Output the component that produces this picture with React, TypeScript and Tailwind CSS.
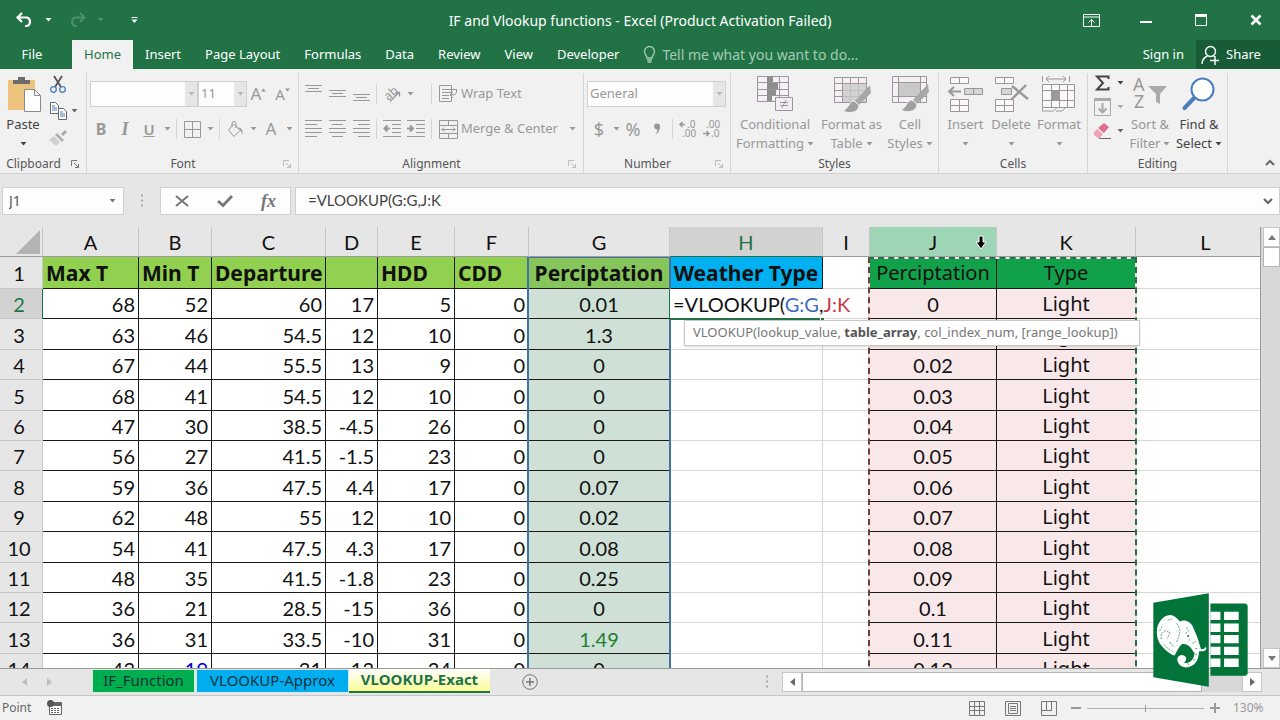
import { useState } from "react";
import type { ReactNode } from "react";

const ui = "font-['Noto_Sans',sans-serif]";
const sheet = "font-[Lato,sans-serif]";

/* ---------- small drawing helpers ---------- */

function Ico({ w, h, children, className = "" }: { w: number; h: number; children: ReactNode; className?: string }) {
  return (
    <svg width={w} height={h} viewBox={"0 0 " + w + " " + h} fill="none" stroke="currentColor" className={"shrink-0 overflow-visible " + className} aria-hidden="true">
      {children}
    </svg>
  );
}

function Caret({ className = "" }: { className?: string }) {
  return <Ico w={7} h={4} className={className}><path d="M0.5 0h6l-3 3.5z" fill="currentColor" stroke="none" /></Ico>;
}

function Launcher({ className = "" }: { className?: string }) {
  return (
    <button aria-label="More options" className={"flex w-4 h-4 items-center justify-center " + className}>
      <Ico w={8} h={8}><path d="M0.5 6V0.5H6M3 3l4 4M7.500 4v3.500H4" /></Ico>
    </button>
  );
}

const Sep = () => <span className="w-px h-5 bg-[#d5d5d5] mx-[3px]" />;

/* ---------- title bar and tabs ---------- */

function TitleBar() {
  return (
    <div className="grid grid-cols-[1fr_auto_1fr] items-center h-10 bg-[#217346] text-white">
      <div className="flex items-center pl-4">
        <button aria-label="Undo" className="w-[18px]">
          <Ico w={18} h={16}><path d="M2 5.500h9a4.500 4.500 0 0 1 0 8.500H9M6 1L1.500 5.500 6 10" strokeWidth="2.200" /></Ico>
        </button>
        <button aria-label="Undo list" className="w-7 flex justify-center"><Caret /></button>
        <button aria-label="Redo" className="w-[18px] ml-[6px] text-[#4c9069]">
          <Ico w={18} h={16}><path d="M16 5.500H7a4.500 4.500 0 0 0 0 8.500h2M12 1l4.500 4.500L12 10" strokeWidth="2" /></Ico>
        </button>
        <button aria-label="Redo list" className="w-7 flex justify-center text-[#4c9069]"><Caret /></button>
        <button aria-label="Customize toolbar" className="w-6 ml-2 flex justify-center">
          <Ico w={7} h={6}><path d="M0.500 0.500h6" /><path d="M0.500 2.500h6l-3 3.500z" fill="currentColor" stroke="none" /></Ico>
        </button>
      </div>
      <h1 className="pt-[2px] text-sm">IF and Vlookup functions - Excel (Product Activation Failed)</h1>
      <div className="flex justify-end gap-[7px]">
        <button aria-label="Ribbon display" className="w-12 h-8 flex items-center justify-center">
          <Ico w={17} h={13}><path d="M0.500 0.500h16v12h-16zM0.500 3h16M8.500 12V5.500M5.500 8.500l3-3 3 3" /></Ico>
        </button>
        <button aria-label="Minimize" className="w-12 h-8 flex items-center justify-center">
          <Ico w={12} h={8}><path d="M0 6h12" strokeWidth="2" /></Ico>
        </button>
        <button aria-label="Maximize" className="w-12 h-8 flex items-center justify-center">
          <Ico w={12} h={12}><path d="M0.500 0.500h11v11h-11z" /><path d="M0 1.500h12" strokeWidth="3" /></Ico>
        </button>
        <button aria-label="Close" className="w-12 h-8 flex items-center justify-center">
          <Ico w={12} h={12}><path d="M1.500 1.500l9 9M10.500 1.500l-9 9" strokeWidth="2.600" /></Ico>
        </button>
      </div>
    </div>
  );
}

const tabs = ["Insert", "Page Layout", "Formulas", "Data", "Review", "View", "Developer"];

function TabBar() {
  return (
    <nav className="flex h-[29px] bg-[#217346] text-white text-[13px]">
      <button className="w-16 mr-2">File</button>
      <button className="w-[61px] bg-[#f1f1f1] text-[#217346]">Home</button>
      {tabs.map(t => <button key={t} className="px-3">{t}</button>)}
      <label className="flex items-center gap-[6px] ml-3 text-sm text-[#a5cab5]">
        <Ico w={13} h={17}><path d="M4 12C4 9.500 1.500 8.500 1.500 5.500a5 5 0 0 1 10 0C11.500 8.500 9 9.500 9 12z" strokeWidth="1.300" /><path d="M4 14h5M4.500 16h4" strokeWidth="1.300" /></Ico>
        <input aria-label="Tell me" placeholder="Tell me what you want to do..." className="w-[210px] bg-transparent outline-none placeholder:text-[#a5cab5]" />
      </label>
      <button className="ml-auto px-3">Sign in</button>
      <button className="flex items-center gap-[6px] w-[84px] pl-[5px] bg-[#185c37]">
        <Ico w={19} h={20}><circle cx="9.500" cy="6.500" r="5" strokeWidth="1.400" /><path d="M1 19c0-4 2-6.500 5.500-8M12.500 11l1.500 1M9 15.500h9M14 11v9" strokeWidth="1.400" /></Ico>
        Share
      </button>
    </nav>
  );
}

/* ---------- ribbon ---------- */

function Group({ name, width, launcher, children }: { name: string; width: string; launcher?: string; children: ReactNode }) {
  return (
    <section aria-label={name} className={"flex flex-col border-r border-[#d5d5d5] mt-1 " + width}>
      <div className="flex-1">{children}</div>
      <div className="flex items-center h-[18px] text-xs text-[#555]">
        <span className="flex-1 text-center">{name}</span>
        {launcher && <Launcher className={"mr-[3px] " + launcher} />}
      </div>
    </section>
  );
}

function Combo({ label, value, width }: { label: string; value: string; width: string }) {
  return (
    <div className={"relative h-[26px] border border-[#d0d0d0] bg-[#fdfdfd] " + width}>
      <select aria-label={label} disabled className="block w-full h-full appearance-none pl-[2px] pr-3 text-[13px] text-[#989898]">
        <option>{value}</option>
      </select>
      <span className="absolute right-0 inset-y-0 w-3 flex items-center justify-center bg-[#e6e6e6] text-[#b5b5b5] pointer-events-none"><Caret /></span>
    </div>
  );
}

function Tool({ label, width = "w-6", children }: { label: string; width?: string; children: ReactNode }) {
  return <button aria-label={label} className={"h-5 flex items-center justify-center shrink-0 " + width}>{children}</button>;
}

function BigTool({ icon, lines, width, color = "text-[#989898]" }: { icon: ReactNode; lines: string[]; width: string; color?: string }) {
  return (
    <button className={"flex flex-col items-center text-[13px] leading-[19px] whitespace-nowrap " + width + " " + color}>
      <span className="h-[42px] flex items-center">{icon}</span>
      <span>{lines[0]}</span>
      <span className="flex items-center gap-[3px] h-[19px]">{lines[1]}<Caret /></span>
    </button>
  );
}

function AlignIcon({ rows }: { rows: [number, number, number][] }) {
  return <Ico w={17} h={18}>{rows.map(([x, y, w]) => <path key={y} d={`M${x} ${y + 0.5}h${w}`} />)}</Ico>;
}

function ClipboardGroup() {
  return (
    <Group name="Clipboard" width="w-[87px]" launcher="text-[#777]">
      <div className="flex">
        <BigTool width="w-[46px]" color="text-[#444]" lines={["Paste", ""]} icon={
          <Ico w={34} h={36} className="ml-1">
            <path d="M0 4h27v30H0z" fill="#ecc37c" stroke="none" />
            <path d="M5 8V4h5V1h7v3h5v4z" fill="#6b6b6b" stroke="none" />
            <path d="M16.500 13.500h10l6 6v16h-16zM26.500 13.500v6h6" fill="#fff" stroke="#8a8a8a" />
          </Ico>
        } />
        <div className="flex flex-col pt-[2px] gap-[6px]">
          <Tool label="Cut" width="w-[23px]">
            <Ico w={16} h={18}><path d="M4 0l7 11M12 0L5 11" stroke="#555" strokeWidth="1.800" /><circle cx="3.500" cy="13.500" r="2.800" stroke="#4a7ebb" strokeWidth="1.300" /><circle cx="12.500" cy="13.500" r="2.800" stroke="#4a7ebb" strokeWidth="1.300" /></Ico>
          </Tool>
          <div className="flex items-center text-[#666]">
            <Tool label="Copy" width="w-[25px]">
              <Ico w={17} h={18}><path d="M0.500 0.500h5l3 3v8h-8zM8.500 6.500h5l3 3v8h-8z" fill="#fff" stroke="#666" /><path d="M2 4h3M2 6h5M2 8h5M10 10h3M10 12h5M10 14h5" stroke="#4a7ebb" /></Ico>
            </Tool>
            <Caret />
          </div>
          <Tool label="Format painter" width="w-[23px]">
            <Ico w={18} h={17}><path d="M12 5l4-4 2 2-4 4z" fill="#aaa" stroke="none" /><path d="M8 4l7 7-2 2-7-7z" fill="#b0b0b0" stroke="none" /><path d="M5 7l6 6-4 4-7-6z" fill="#cfcfcf" stroke="none" /></Ico>
          </Tool>
        </div>
      </div>
    </Group>
  );
}

function FontGroup() {
  return (
    <Group name="Font" width="w-[212px]" launcher="text-[#bbb]">
      <div className="flex items-center pt-2 pl-[3px] text-[#989898]">
        <Combo label="Font" value=" " width="w-[108px]" />
        <Combo label="Font size" value="11" width="w-[49px]" />
        <Tool label="Increase font size"><span className="text-[17px]">A</span><Ico w={6} h={12}><path d="M0 3.500L2.500 0.500 5 3.500z" fill="currentColor" stroke="none" /></Ico></Tool>
        <Tool label="Decrease font size"><span className="text-[15px]">A</span><Ico w={6} h={12}><path d="M0 0.500h5L2.500 3.500z" fill="currentColor" stroke="none" /></Ico></Tool>
      </div>
      <div className="flex items-center pt-3 pl-[2px] text-[#989898]">
        <Tool label="Bold"><b className="text-base">B</b></Tool>
        <Tool label="Italic"><i className="text-lg font-semibold font-['Liberation_Serif',serif]">I</i></Tool>
        <Tool label="Underline"><u className="text-[15px] font-semibold">U</u></Tool>
        <Tool label="Underline styles" width="w-3"><Caret /></Tool>
        <Sep />
        <Tool label="Borders"><Ico w={17} h={17}><path d="M0.500 0.500h16v16h-16zM8.500 0v17M0 8.500h17" /></Ico></Tool>
        <Tool label="Border styles" width="w-3"><Caret /></Tool>
        <Sep />
        <Tool label="Fill color"><Ico w={17} h={17}><path d="M6.500 3l6.500 6.500-6 6L1.500 9zM5 6V2.500a2 2 0 0 1 4 0V7" /><path d="M11 6.500c3 0 5 2 4.500 7-1-2-1.500-4-4.500-7z" fill="currentColor" stroke="none" /></Ico></Tool>
        <Tool label="Fill colors" width="w-3"><Caret /></Tool>
        <Tool label="Font color"><span className="text-[17px]">A</span></Tool>
        <Tool label="Font colors" width="w-3"><Caret /></Tool>
      </div>
    </Group>
  );
}

function AlignmentGroup() {
  return (
    <Group name="Alignment" width="w-[285px]" launcher="text-[#bbb]">
      <div className="flex items-center pt-[11px] pl-[2px] text-[#989898]">
        <Tool label="Top align"><AlignIcon rows={[[0, 0, 17], [3, 3, 11], [0, 6, 17]]} /></Tool>
        <Tool label="Middle align"><AlignIcon rows={[[0, 5, 17], [3, 8, 11], [0, 11, 17]]} /></Tool>
        <Tool label="Bottom align"><AlignIcon rows={[[0, 9, 17], [3, 12, 11], [0, 15, 17]]} /></Tool>
        <Sep />
        <Tool label="Orientation">
          <Ico w={17} h={16}><text x="0" y="12" fontSize="12" fill="currentColor" stroke="none" transform="rotate(-42 6 8)">ab</text><path d="M6 15.500l9-9M11.500 6.500H15.500V10.500" strokeWidth="1.300" /></Ico>
        </Tool>
        <Tool label="Orientations" width="w-3"><Caret /></Tool>
        <span className="w-3" />
        <Sep />
        <button className="flex items-center gap-[3px] ml-1 text-[13px]">
          <Ico w={19} h={18}><path d="M0.500 0.500h12v16h-12zM3 4.500h14M3 7.500h10M3 10.500h7M3 13.500h7M17.500 4v3q0 3-6 3M14 7l-3 3 3 3" /></Ico>
          Wrap Text
        </button>
      </div>
      <div className="flex items-center pt-[15px] pl-[2px] text-[#989898]">
        <Tool label="Align left"><AlignIcon rows={[[0, 0, 17], [0, 4, 12], [0, 8, 17], [0, 12, 17], [0, 16, 12]]} /></Tool>
        <Tool label="Center"><AlignIcon rows={[[0, 0, 17], [3, 4, 11], [0, 8, 17], [0, 12, 17], [3, 16, 11]]} /></Tool>
        <Tool label="Align right"><AlignIcon rows={[[0, 0, 17], [5, 4, 12], [0, 8, 17], [0, 12, 17], [5, 16, 12]]} /></Tool>
        <Sep />
        <Tool label="Decrease indent"><Ico w={18} h={18}><path d="M0 0.500h18M9 4.500h9M9 8.500h9M9 12.500h9M0 16.500h18" /><path d="M7 8.500H2M4.500 5.500l-3 3 3 3" strokeWidth="2" /></Ico></Tool>
        <Tool label="Increase indent"><Ico w={18} h={18}><path d="M0 0.500h18M9 4.500h9M9 8.500h9M9 12.500h9M0 16.500h18" /><path d="M0 8.500h5M3 5.500l3 3-3 3" strokeWidth="2" /></Ico></Tool>
        <Sep />
        <button className="flex items-center gap-[3px] ml-1 text-[13px] whitespace-nowrap">
          <Ico w={19} h={19}><path d="M0.500 0.500h18v18h-18zM0.500 5.500h18M0.500 13.500h18M9.500 0.500v5M9.500 13.500v5M2.500 9.500h14M5 7.500l-2 2 2 2M14 7.500l2 2-2 2" /></Ico>
          Merge &amp; Center
          <Caret className="ml-2" />
        </button>
      </div>
    </Group>
  );
}

function NumberGroup() {
  return (
    <Group name="Number" width="w-[147px]" launcher="text-[#bbb]">
      <div className="pt-2 pl-[3px]">
        <Combo label="Number format" value="General" width="w-[139px]" />
      </div>
      <div className="flex items-center pt-3 pl-[3px] text-[#989898]">
        <Tool label="Accounting format"><span className="text-lg">$</span></Tool>
        <Tool label="Currencies" width="w-[10px]"><Caret /></Tool>
        <Tool label="Percent"><span className="text-lg">%</span></Tool>
        <Tool label="Comma style"><Ico w={8} h={12}><path d="M1 3.500a3 3 0 1 1 6 0c0 4-2 6.500-4.500 8 1-2 2-3 2-5A3 3 0 0 1 1 3.500z" fill="currentColor" stroke="none" /></Ico></Tool>
        <Sep />
        <Tool label="Increase decimal">
          <Ico w={18} h={18}><path d="M6 4.500H1M3.500 2L1 4.500 3.500 7" strokeWidth="1.500" /><g fill="currentColor" stroke="none" fontSize="10"><text x="8" y="8">.0</text><text x="3" y="17">.00</text></g></Ico>
        </Tool>
        <Tool label="Decrease decimal">
          <Ico w={18} h={18}><path d="M0 13.500h6M3.500 11L6 13.500 3.500 16" strokeWidth="1.500" /><g fill="currentColor" stroke="none" fontSize="10"><text x="3" y="8">.00</text><text x="8" y="17">.0</text></g></Ico>
        </Tool>
      </div>
    </Group>
  );
}

const Brush = () => (
  <g stroke="none">
    <path d="M36 8L21 24l4 4L37 16z" fill="#a8a8a8" />
    <path d="M20 24c-5 0-5 7-11 10 6 3 16 2 16-6z" fill="#a0a0a0" stroke="#f1f1f1" />
  </g>
);

function StylesGroup() {
  return (
    <Group name="Styles" width="w-[208px]">
      <div className="flex">
        <BigTool width="w-[88px]" lines={["Conditional", "Formatting"]} icon={
          <Ico w={36} h={36}>
            <path d="M0.500 0.500h31v25h-31zM0.500 6.500h31M0.500 13.500h31M0.500 19.500h31M10.500 0v26M22.500 0v26" fill="#f6f0f6" />
            <path d="M10 1h6v5h-6zM10 7h11v6H10zM10 14h9v5h-9zM10 20h5v5h-5z" fill="#8e8e8e" stroke="none" />
            <path d="M18.500 21.500h17v13h-17z" fill="#f3eef3" /><path d="M23 26.500h8M23 29.500h8M29 24l-4 8" />
          </Ico>
        } />
        <BigTool width="w-[65px]" lines={["Format as", "Table"]} icon={
          <Ico w={36} h={34}>
            <path d="M0.500 0.500h32v25h-32zM0.500 6.500h32M0.500 13.500h32M0.500 19.500h32M8.500 0v26M16.500 0v26M24.500 0v26" fill="#f6f0f6" />
            <path d="M9 7h23v18H9z" fill="#c9c9cb" fillOpacity="0.800" stroke="none" /><Brush />
          </Ico>
        } />
        <BigTool width="w-[52px]" lines={["Cell", "Styles"]} icon={
          <Ico w={36} h={36}>
            <path d="M0.500 0.500h34v26h-34zM0.500 6.500h34M0.500 20.500h34M6.500 0v26M28.500 0v26" fill="#f6f0f6" />
            <path d="M7 7h21v13H7z" fill="#c9c9cb" stroke="none" /><Brush />
          </Ico>
        } />
      </div>
    </Group>
  );
}

function CellsGroup() {
  return (
    <Group name="Cells" width="w-[149px]">
      <div className="flex pl-1">
        <BigTool width="w-[45px]" lines={["Insert", ""]} icon={
          <Ico w={36} h={35}>
            <path d="M2.500 0.500h18v6h-18zM11.500 0v7M2.500 22.500h18v12h-18zM2.500 28.500h18M11.500 22v12" fill="#fbf7fb" />
            <path d="M16.500 11.500h18v6h-18zM25.500 11v7" fill="#d5d5d5" /><path d="M13 14.500H1M6 10l-5 4.500 5 4.500" strokeWidth="2" />
          </Ico>
        } />
        <BigTool width="w-[46px]" lines={["Delete", ""]} icon={
          <Ico w={36} h={35}>
            <path d="M2.500 0.500h18v6h-18zM11.500 0v7M2.500 22.500h18v12h-18zM2.500 28.500h18M11.500 22v12" fill="#fbf7fb" />
            <path d="M8.500 11.500h10v6h-10z" fill="#d5d5d5" /><path d="M19 9l16 13M33 8L18 23" strokeWidth="2.400" />
          </Ico>
        } />
        <BigTool width="w-[50px]" lines={["Format", ""]} icon={
          <Ico w={34} h={36}>
            <path d="M0.500 0v6M27.500 0v6M4 3h20M7 0L4 3l3 3M21 0l3 3-3 3" />
            <path d="M0.500 8.500h32v23h-32zM0.500 14.500h32M0.500 24.500h32M9.500 8v24M17.500 8v24M25.500 8v24M0.500 32v3h11l3-3M14 35h6l3-3" fill="#fbf7fb" />
            <path d="M9 15h9v10H9z" fill="#9a9a9a" stroke="none" />
          </Ico>
        } />
      </div>
    </Group>
  );
}

function EditingGroup() {
  return (
    <Group name="Editing" width="w-[140px]">
      <div className="flex">
        <div className="flex flex-col gap-1 w-[37px]">
          <div className="flex items-center text-[#444]">
            <Tool label="AutoSum" width="w-[29px]"><Ico w={15} h={16}><path d="M13.500 4V1.500H2L8 8l-6 6.500h11.500V12" strokeWidth="2" /></Ico></Tool><Caret />
          </div>
          <div className="flex items-center text-[#aaa]">
            <Tool label="Fill" width="w-[29px]"><Ico w={17} h={18}><path d="M0.500 0.500h16v17h-16z" /><path d="M0 1.500h17" strokeWidth="3" /><path d="M8.500 5v9M4.500 10.500l4 4 4-4" strokeWidth="2" /></Ico></Tool><Caret />
          </div>
          <div className="flex items-center text-[#666]">
            <Tool label="Clear" width="w-[29px]"><Ico w={18} h={16}><path d="M0 9l3-3 6 5-3 4H4L0 12z" fill="#f0a3b2" stroke="none" /><path d="M4 5l6-5 5 4-5 6z" fill="#e0708b" stroke="none" /><path d="M5 15.500h12" /></Ico></Tool><Caret />
          </div>
        </div>
        <BigTool width="w-[50px]" lines={["Sort &", "Filter"]} icon={
          <Ico w={34} h={32}>
            <g fill="currentColor" stroke="none" fontSize="18"><text x="0" y="13">A</text><text x="1" y="30">Z</text></g>
            <path d="M15 8h19l-7 8v10l-4-2v-8z" fill="#aaa" stroke="none" />
          </Ico>
        } />
        <BigTool width="w-[48px]" color="text-[#444]" lines={["Find &", "Select"]} icon={
          <Ico w={34} h={34}><path d="M2.500 31L13 20" stroke="#4a7ebb" strokeWidth="4" strokeLinecap="round" /><circle cx="20.500" cy="12.500" r="11" fill="#fff" stroke="#4a7ebb" strokeWidth="2" /></Ico>
        } />
      </div>
    </Group>
  );
}

function Ribbon() {
  return (
    <div className="flex h-[105px] bg-[#f1f1f1] border-b border-[#d2d2d2]">
      <ClipboardGroup />
      <FontGroup />
      <AlignmentGroup />
      <NumberGroup />
      <StylesGroup />
      <CellsGroup />
      <EditingGroup />
      <button aria-label="Collapse ribbon" className="ml-auto self-end p-[5px] text-[#666]">
        <Ico w={10} h={10}><path d="M1 7l4-4 4 4" strokeWidth="2" /></Ico>
      </button>
    </div>
  );
}

/* ---------- formula bar ---------- */

const Dots = () => <Ico w={3} h={14}><path d="M0 1.500h2M0 6.500h2M0 11.500h2" stroke="#aaa" strokeWidth="2" /></Ico>;

function FormulaBar({ formula, onChange }: { formula: string; onChange: (v: string) => void }) {
  return (
    <div className="flex items-center h-[53px] pl-[2px] bg-[#e6e6e6]">
      <div className="flex items-center w-[122px] h-7 pr-[7px] bg-[#fdfdfd] border border-[#d0d0d0] text-[#777]">
        <input aria-label="Name box" defaultValue="J1" className="flex-1 min-w-0 pl-[6px] text-sm text-[#555] outline-none" />
        <Caret />
      </div>
      <span className="w-9 flex justify-center"><Dots /></span>
      <div className="flex items-center justify-around w-[131px] h-7 bg-[#fdfdfd] border border-[#d0d0d0] text-[#777]">
        <button aria-label="Cancel"><Ico w={14} h={12}><path d="M1 1l12 10M13 1L1 11" strokeWidth="2" /></Ico></button>
        <button aria-label="Enter"><Ico w={16} h={12}><path d="M1 6l5 4.500L15 1" strokeWidth="2.800" /></Ico></button>
        <button aria-label="Insert function" className="text-lg leading-5 italic font-bold font-['Liberation_Serif',serif]">fx</button>
      </div>
      <div className="flex flex-1 items-center h-7 ml-1 pr-[6px] bg-[#fdfdfd] border border-[#d0d0d0]">
        <input aria-label="Formula" value={formula} onChange={e => onChange(e.target.value)} className={"flex-1 pl-3 text-[15px] text-[#444] outline-none " + sheet} />
        <Ico w={10} h={8} className="text-[#666]"><path d="M1 2l4 4 4-4" strokeWidth="2.200" /></Ico>
      </div>
    </div>
  );
}

/* ---------- sheet ---------- */

const rows: string[][] = [
  ["68", "52", "60", "17", "5", "0", "0.01", "0"],
  ["63", "46", "54.5", "12", "10", "0", "1.3", "0.01"],
  ["67", "44", "55.5", "13", "9", "0", "0", "0.02"],
  ["68", "41", "54.5", "12", "10", "0", "0", "0.03"],
  ["47", "30", "38.5", "-4.5", "26", "0", "0", "0.04"],
  ["56", "27", "41.5", "-1.5", "23", "0", "0", "0.05"],
  ["59", "36", "47.5", "4.4", "17", "0", "0.07", "0.06"],
  ["62", "48", "55", "12", "10", "0", "0.02", "0.07"],
  ["54", "41", "47.5", "4.3", "17", "0", "0.08", "0.08"],
  ["48", "35", "41.5", "-1.8", "23", "0", "0.25", "0.09"],
  ["36", "21", "28.5", "-15", "36", "0", "0", "0.1"],
  ["36", "31", "33.5", "-10", "31", "0", "1.49", "0.11"],
  ["43", "19", "31", "-13", "34", "0", "0", "0.12"],
];

const colHead = "border-r border-b border-r-[#c6c6c6] border-b-[#9b9b9b] font-normal";
const black = "border-r border-b border-[#1a1a1a]";
const grey = "border-r border-b border-[#d6d6d6]";
const title = "text-[21px] font-bold whitespace-nowrap ";

function textColor(v: string) {
  if (v === "19") return " text-[#0000d0]";
  if (v === "1.49") return " text-[#1d8030]";
  return "";
}

function CellEditor({ formula }: { formula: string }) {
  const [, head = formula, first = "", comma = "", second = ""] = formula.match(/^(.*\()([^,]*)(,?)(.*)$/) || [];
  return (
    <div className="absolute left-0 top-0 z-20 w-[198px] h-full">
      <div role="textbox" aria-label="H2" className="h-full pl-[3px] pt-px bg-white text-left whitespace-nowrap">
        {head}<span className="text-[#3a6cc0]">{first}</span>{comma}<span className="text-[#c8374a]">{second}</span>
      </div>
      <span className="absolute -left-px -top-px w-[154px] h-8 border border-b-2 border-[#217346] border-r-transparent border-t-transparent" />
      <span className="absolute left-[150px] -bottom-1 w-[5px] h-[5px] bg-[#217346] border border-white" />
      <div role="tooltip" className={"absolute left-[14px] top-[31px] w-[456px] h-[26px] px-2 leading-[22px] bg-white border border-[#c8c8c8] shadow-sm text-[13px] text-left text-[#777] whitespace-nowrap " + ui}>
        VLOOKUP(lookup_value, <b className="text-[#555]">table_array</b>, col_index_num, [range_lookup])
      </div>
    </div>
  );
}

function Sheet({ formula }: { formula: string }) {
  return (
    <div className="flex-1 min-w-0 overflow-hidden border-r border-[#9b9b9b] bg-white">
      <table className={"w-full min-w-[1276px] table-fixed border-separate border-spacing-0 text-xl leading-7 text-[#111] " + sheet}>
        <colgroup>
          <col className="w-[43px]" /><col className="w-[96px]" /><col className="w-[73px]" /><col className="w-[114px]" />
          <col className="w-[52px]" /><col className="w-[77px]" /><col className="w-[74px]" /><col className="w-[141px]" />
          <col className="w-[153px]" /><col className="w-[47px]" /><col className="w-[127px]" /><col className="w-[139px]" /><col />
        </colgroup>
        <thead>
          <tr className="h-[30px] bg-[#e6e6e6]">
            <th className={colHead}>
              <svg width="24" height="24" className="ml-4" aria-hidden="true"><path d="M24 0v24H0z" fill="#b4b4b4" /></svg>
            </th>
            {["A", "B", "C", "D", "E", "F", "G"].map(c => <th key={c} className={colHead}>{c}</th>)}
            <th className={colHead + " bg-[#d2d2d2] text-[#217346] border-b-[#217346]"}>H</th>
            <th className={colHead}>I</th>
            <th className={colHead + " relative bg-[#9fd5b7]"}>
              J
              <svg width="12" height="15" className="absolute right-[9px] top-2" aria-hidden="true"><path d="M4 1h4v6h3l-5 7-5-7h3z" fill="#000" stroke="#fff" /></svg>
            </th>
            <th className={colHead}>K</th>
            <th className={colHead}>L</th>
          </tr>
        </thead>
        <tbody className="[&_td]:pt-px [&_th]:pt-px [&_th]:pr-1">
          <tr className={"h-8 " + ui}>
            <th className={"bg-[#e6e6e6] font-normal border-r border-b border-[#c6c6c6] " + sheet}>1</th>
            {["Max T", "Min T", "Departure", "", "HDD", "CDD"].map((t, i) => (
              <td key={i} className={"pl-[3px] bg-[#92d050] " + title + black}>{t}</td>
            ))}
            <td className={"relative bg-[#86c45c] text-center " + title + black}>
              Perciptation
              <span className="absolute -left-[2px] top-0 z-10 w-[144px] h-[500px] border-2 border-t border-[#4472a8] pointer-events-none" />
            </td>
            <td className={"bg-[#00b0f0] text-center " + title + black}>Weather Type</td>
            <td className={grey} />
            <td className={"relative bg-[#12a14b] text-center " + black}>
              Perciptation
              <span className="absolute -left-[2px] top-0 z-10 w-[269px] h-[500px] border-2 border-[#f4dfe2] pointer-events-none">
                <span className="absolute -inset-[2px] border-2 border-dashed border-[#217346] border-l-[#6b4038]" />
              </span>
            </td>
            <td className={"bg-[#12a14b] text-center " + black}>Type</td>
            <td className={grey} />
          </tr>
          {rows.map((r, i) => {
            const n = i + 2;
            return (
              <tr key={n} className={n % 5 === 3 || n % 5 === 0 ? "h-[31px]" : "h-[30px]"}>
                <th className={"font-normal border-r border-b " + (n === 2 ? "bg-[#d2d2d2] text-[#217346] border-b-[#c6c6c6] border-r-[#217346]" : "bg-[#e6e6e6] border-[#c6c6c6]")}>{n}</th>
                {r.slice(0, 6).map((v, c) => <td key={c} className={"pr-[3px] text-right " + black + textColor(v)}>{v}</td>)}
                <td className={"bg-[#cfe0d6] text-center " + black + textColor(r[6])}>{r[6]}</td>
                <td className={"relative " + grey}>{n === 2 && <CellEditor formula={formula} />}</td>
                <td className={grey} />
                <td className={"bg-[#f9e8ea] text-center " + black}>{r[7]}</td>
                <td className={"bg-[#f9e8ea] text-center " + black + " " + ui}>Light</td>
                <td className={grey} />
              </tr>
            );
          })}
        </tbody>
      </table>
    </div>
  );
}

function VerticalScroll() {
  const btn = "flex items-center justify-center h-5 bg-[#fdfdfd] border border-[#c6c6c6] text-[#777] ";
  return (
    <div className="flex flex-col w-[19px] pl-[2px] bg-[#d8d8d8]">
      <button aria-label="Scroll up" className={btn}><Ico w={8} h={5}><path d="M0 5h8L4 0z" fill="currentColor" stroke="none" /></Ico></button>
      <span className="h-5 bg-white border border-[#b5b5b5]" />
      <button aria-label="Scroll down" className={btn + "mt-auto"}><Ico w={8} h={5}><path d="M0 0h8L4 5z" fill="currentColor" stroke="none" /></Ico></button>
    </div>
  );
}

function Logo() {
  return (
    <svg width="95" height="94" viewBox="99 39 286 282" className="absolute right-8 bottom-[33px] z-30" role="img" aria-label="Spreadsheet elephant">
      <path d="M100 68L267 39V321L100 292zM272 70H378l6 6V282l-6 6H272z" fill="#02743a" />
      <path d="M272 95h30v25h-30zM313 95h44v25h-44zM272 130h30v26h-30zM313 130h44v26h-44zM272 165h30v25h-30zM313 165h44v25h-44zM272 200h30v25h-30zM313 200h44v25h-44zM272 236h30v25h-30zM313 236h44v25h-44z" fill="#fff" />
      {/* ear and head, then the curled trunk and tusk */}
      <path d="M111 148C114 126 130 106 150 105C162 105 170 114 180 124C192 117 213 123 220 142C226 158 234 170 238 190L243 206C250 209 255 205 258 200C263 208 256 215 243 214L222 218C214 200 200 190 188 192C180 194 172 212 164 227C150 224 126 203 117 186C110 172 110 160 111 148z" fill="#fff" />
      <path d="M230 200C233 226 228 252 198 256C177 254 172 229 188 232C196 234 192 243 186 241" fill="none" stroke="#fff" strokeWidth="13" strokeLinecap="round" strokeLinejoin="round" />
      <path d="M119 152l9-16M124 178q-4-18 12-26l14 6-8 18M132 194q10 12 27 21M143 120l14-3M150 186q6 12 13 14M170 130q13 16 9 32l-9 26M200 142l6 12M197 160l7-5M206 182l8-6M218 190l11-6M226 206l9-2M226 223l9 3M220 237l8 5M204 250l4 8" fill="none" stroke="#02743a" strokeWidth="2" strokeDasharray="6 3" />
      <circle cx="205" cy="168" r="3" fill="#02743a" />
    </svg>
  );
}

/* ---------- bottom bars ---------- */

function SheetTabs() {
  const btn = "flex items-center justify-center w-5 h-5 bg-[#fdfdfd] border border-[#c6c6c6] text-[#666]";
  return (
    <div className="flex h-[27px] bg-[#e6e6e6] border-t border-[#9b9b9b] text-[15px] leading-5">
      <div className="flex items-center w-[92px] pl-[22px] gap-5 text-[#bdbdbd]">
        <button aria-label="Previous sheet"><Ico w={5} h={8}><path d="M5 0v8L0 4z" fill="currentColor" stroke="none" /></Ico></button>
        <button aria-label="Next sheet"><Ico w={5} h={8}><path d="M0 0v8l5-4z" fill="currentColor" stroke="none" /></Ico></button>
      </div>
      <button className="w-[103px] h-6 pb-[2px] bg-[#00ae50] border border-[#d5ecd9] text-[#133]">IF_Function</button>
      <button className="w-[153px] h-6 pb-[2px] bg-[#00aeef] border border-[#d5e9f5] ml-px text-[#134]">VLOOKUP-Approx</button>
      <button className="w-[141px] h-6 pb-[2px] bg-gradient-to-b from-white to-[#fbfb90] border-b-2 border-[#217346] text-[#217346] font-bold">VLOOKUP-Exact</button>
      <button aria-label="New sheet" className="w-20 flex items-center justify-center text-[#777]">
        <Ico w={16} h={16}><circle cx="8" cy="8" r="7.300" /><path d="M8 4v8M4 8h8" strokeWidth="1.500" /></Ico>
      </button>
      <div className="flex items-center ml-auto mr-[18px] gap-[13px]">
        <Dots />
        <div className="flex w-[480px] bg-[#d8d8d8]">
          <button aria-label="Scroll left" className={btn}><Ico w={5} h={8}><path d="M5 0v8L0 4z" fill="currentColor" stroke="none" /></Ico></button>
          <span className="w-[400px] bg-white border border-[#b5b5b5]" />
          <button aria-label="Scroll right" className={btn + " ml-auto"}><Ico w={5} h={8}><path d="M0 0v8l5-4z" fill="currentColor" stroke="none" /></Ico></button>
        </div>
      </div>
    </div>
  );
}

function StatusBar() {
  return (
    <div className="flex items-center h-[25px] pl-[2px] pr-[13px] bg-[#f1f1f1] border-t border-[#c6c6c6] text-xs text-[#666]">
      <span>Point</span>
      <button aria-label="Record macro" className="ml-4">
        <Ico w={16} h={16}><path d="M2.500 2.500h12v12h-12z" fill="#fff" /><path d="M6 3h9v3H6z" fill="currentColor" stroke="none" /><path d="M4 8.500h9M4 10.500h9M4 12.500h9" strokeDasharray="2 1" /><circle cx="3.500" cy="3.500" r="3.500" fill="#555" stroke="none" /></Ico>
      </button>
      <div className="flex items-center ml-auto gap-5 text-[#777]">
        <button aria-label="Normal view"><Ico w={16} h={15}><path d="M0.500 0.500h15v14h-15zM5.500 0v15M10.500 0v15M0 5.500h16M0 9.500h16" /></Ico></button>
        <button aria-label="Page layout view"><Ico w={16} h={15}><path d="M0.500 0.500h15v14h-15zM3.500 2.500h9v10h-9zM5 5.500h6M5 7.500h6M5 9.500h6" /></Ico></button>
        <button aria-label="Page break view"><Ico w={16} h={15}><path d="M0.500 0.500h15v14h-15zM5.500 0v9M10.500 0v9M0 9.500h11" /></Ico></button>
      </div>
      <div className="flex items-center ml-[14px] text-[#999]">
        <button aria-label="Zoom out"><Ico w={10} h={10}><path d="M0 5h10" strokeWidth="2" /></Ico></button>
        <input type="range" aria-label="Zoom" min={0} max={100} defaultValue={50} className="w-[117px] h-px mx-[6px] appearance-none bg-[#b0b0b0] [&::-webkit-slider-thumb]:appearance-none [&::-webkit-slider-thumb]:w-px [&::-webkit-slider-thumb]:h-[7px] [&::-webkit-slider-thumb]:bg-[#999]" />
        <button aria-label="Zoom in"><Ico w={10} h={10}><path d="M0 5h10M5 0v10" strokeWidth="2" /></Ico></button>
        <span className="w-[34px] ml-[13px]">130%</span>
      </div>
    </div>
  );
}

export default function App() {
  const [formula, setFormula] = useState("=VLOOKUP(G:G,J:K");

  return (
    <div className={"relative flex flex-col h-screen overflow-hidden bg-[#e6e6e6] " + ui}>
      <TitleBar />
      <TabBar />
      <Ribbon />
      <FormulaBar formula={formula} onChange={setFormula} />
      <main className="flex flex-1 min-h-0">
        <Sheet formula={formula} />
        <VerticalScroll />
      </main>
      <SheetTabs />
      <StatusBar />
      <Logo />
    </div>
  );
}
